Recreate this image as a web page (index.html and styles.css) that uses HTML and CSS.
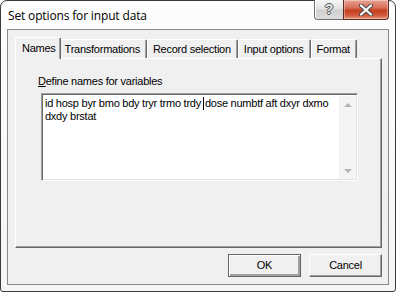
FILE: index.html
```html
<!DOCTYPE html>
<html>
<head>
  <meta charset="UTF-8">
  <link rel="stylesheet" href="styles.css">
</head>
<body>
  <div class="window">
    <div class="titlebar">
      <div class="title">Set options for input data</div>
      <div class="controls">
        <div class="btn-help">?</div>
        <div class="btn-close">
          <svg width="14" height="12" viewBox="0 0 14 12">
            <path d="M2 1.5 L12 10.5 M12 1.5 L2 10.5" stroke="#4a4a4a" stroke-width="4.2" stroke-linecap="round"/>
            <path d="M2 1.5 L12 10.5 M12 1.5 L2 10.5" stroke="#fff" stroke-width="2.2" stroke-linecap="round"/>
          </svg>
        </div>
      </div>
    </div>

    <div class="client">
      <div class="tabs">
        <div class="tab active">Names</div>
        <div class="tab">Transformations</div>
        <div class="tab">Record selection</div>
        <div class="tab">Input options</div>
        <div class="tab">Format</div>
      </div>
      <div class="panel">
        <div class="label"><u>D</u>efine names for variables</div>
        <div class="field">
          <div class="field-text">id hosp byr bmo bdy tryr trmo trdy<span class="caret"></span>dose numbtf aft dxyr dxmo<br>dxdy brstat</div>
          <div class="scroll">
            <span class="arrow up"></span>
            <span class="arrow down"></span>
          </div>
        </div>
      </div>
      <div class="buttons">
        <div class="button default">OK</div>
        <div class="button">Cancel</div>
      </div>
    </div>
  </div>
</body>
</html>
```

FILE: styles.css
```css
* {
  margin: 0;
  padding: 0;
  box-sizing: border-box;
}

body {
  width: 396px;
  height: 292px;
  background: #fff;
  font-family: Tahoma, "Liberation Sans", sans-serif;
  font-size: 11px;
  letter-spacing: -0.25px;
  color: #000;
  overflow: hidden;
}

/* cadre de la fenêtre */
.window {
  width: 396px;
  height: 292px;
  border: 1px solid #3a3a3a;
  border-radius: 7px 7px 3px 3px;
  background: linear-gradient(#fdfdfd, #f3f5f7);
  display: flex;
  flex-direction: column;
  padding: 0 6px 6px;
}

.titlebar {
  height: 28px;
  display: flex;
  align-items: flex-start;
}

.title {
  font-family: "Open Sans", "Liberation Sans", sans-serif;
  font-size: 12px;
  letter-spacing: -0.15px;
  line-height: 16px;
  padding: 7px 0 0 1px;
  color: #000;
}

.controls {
  margin-left: auto;
  margin-top: -1px;
  display: flex;
}

.btn-help {
  width: 29px;
  height: 20px;
  border: 1px solid #6f6f6f;
  border-right: none;
  border-top: none;
  border-radius: 0 0 0 4px;
  background: linear-gradient(#f6f6f6 0%, #e3e3e3 45%, #cfcfcf 55%, #dcdcdc 100%);
  box-shadow: inset 1px 0 0 #fff;
  color: #e8e8e8;
  font-family: "Liberation Sans", sans-serif;
  font-weight: bold;
  font-size: 14px;
  line-height: 18px;
  text-align: center;
  text-shadow: 1px 0 0 #555, -1px 0 0 #555, 0 1px 0 #555, 0 -1px 0 #555;
}

.btn-close {
  width: 46px;
  height: 20px;
  border: 1px solid #5b2a20;
  border-top: none;
  border-radius: 0 0 4px 0;
  background: linear-gradient(#e8a493 0%, #d8705a 40%, #c4401f 55%, #d0583a 80%, #e59a7c 100%);
  box-shadow: inset 0 0 0 1px rgba(255, 255, 255, 0.35);
  display: flex;
  align-items: center;
  justify-content: center;
}

/* zone cliente */
.client {
  flex: 1;
  border: 1px solid #8a8a8a;
  background: #f0f0f0;
  padding: 7px 6px 0 7px;
  display: flex;
  flex-direction: column;
}

.tabs {
  height: 21px;
  display: flex;
  align-items: flex-end;
  padding-left: 2px;
  position: relative;
  z-index: 1;
}

.tab {
  height: 19px;
  padding: 2px 6px 0 5px;
  border-top: 1px solid #fff;
  border-left: 1px solid #fff;
  border-right: 1px solid #696969;
  border-radius: 2px 2px 0 0;
  box-shadow: inset -1px 0 0 #a0a0a0;
  line-height: 14px;
  white-space: nowrap;
  background: #f0f0f0;
}

.tab.active {
  height: 22px;
  margin: 0 -2px -1px -2px;
  padding: 3px 4px 0 6px;
  position: relative;
  z-index: 2;
}

.panel {
  height: 190px;
  border-top: 1px solid #fff;
  border-left: 1px solid #fff;
  border-right: 1px solid #696969;
  border-bottom: 1px solid #696969;
  box-shadow: inset -1px -1px 0 #a0a0a0;
  padding: 16px 0 0 22px;
}

.label {
  line-height: 13px;
}

.field {
  width: 317px;
  height: 88px;
  margin: 5px 0 0 3px;
  border-top: 1px solid #a0a0a0;
  border-left: 1px solid #a0a0a0;
  border-right: 1px solid #fff;
  border-bottom: 1px solid #fff;
  box-shadow: inset 1px 1px 0 #696969, inset -1px -1px 0 #e3e3e3;
  background: #fff;
  display: flex;
  padding: 2px 1px 1px 2px;
}

.field-text {
  flex: 1;
  padding: 1px 0 0 1px;
  line-height: 13px;
  white-space: nowrap;
}

.caret {
  display: inline-block;
  width: 1px;
  height: 13px;
  background: #000;
  margin: 0 1px 0 2px;
  vertical-align: -3px;
}

.scroll {
  width: 17px;
  background: #f4f4f4;
  display: flex;
  flex-direction: column;
  justify-content: space-between;
  align-items: center;
  padding: 7px 0 6px;
}

.arrow {
  width: 0;
  height: 0;
  border-left: 4px solid transparent;
  border-right: 4px solid transparent;
}

.arrow.up {
  border-bottom: 4px solid #b4b4b4;
}

.arrow.down {
  border-top: 4px solid #b4b4b4;
}

.buttons {
  display: flex;
  justify-content: flex-end;
  gap: 8px;
  margin-top: 6px;
}

.button {
  width: 73px;
  height: 23px;
  border-top: 1px solid #fff;
  border-left: 1px solid #fff;
  border-right: 1px solid #696969;
  border-bottom: 1px solid #696969;
  box-shadow: inset -1px -1px 0 #a0a0a0;
  text-align: center;
  line-height: 20px;
  background: #f0f0f0;
}

.button.default {
  border: 1px solid #646464;
  box-shadow: inset 1px 1px 0 #fff, inset -2px -2px 0 #a0a0a0;
}
```
